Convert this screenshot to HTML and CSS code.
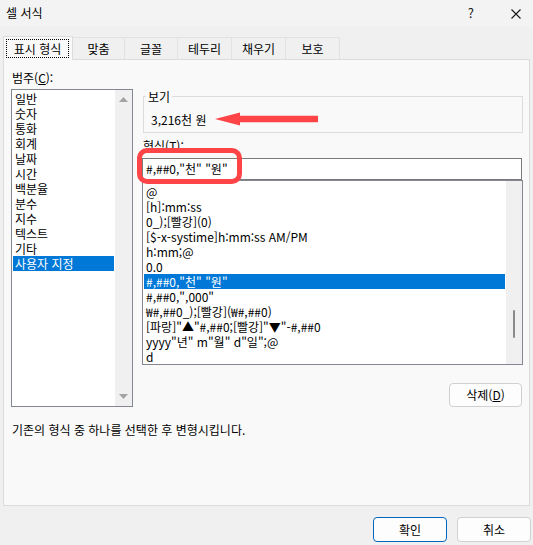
FILE: index.html
```html
<!DOCTYPE html>
<html lang="ko">
<head>
<meta charset="utf-8">
<title>셀 서식</title>
<link rel="stylesheet" href="styles.css">
</head>
<body>
<div class="titlebar">
  <span class="title">셀 서식</span>
  <span class="help">?</span>
  <svg class="close" width="10" height="10" viewBox="0 0 10 10"><path d="M0.5 0.5L9.5 9.5M9.5 0.5L0.5 9.5" stroke="#1a1a1a" stroke-width="1.1" fill="none"/></svg>
</div>
<div class="tabs">
  <div class="tab active"><span class="focus">표시 형식</span></div>
  <div class="tab w53">맞춤</div>
  <div class="tab w54">글꼴</div>
  <div class="tab w55">테두리</div>
  <div class="tab w55">채우기</div>
  <div class="tab w55">보호</div>
</div>
<div class="panel">
  <div class="top">
    <div class="left">
      <div class="label cat-label">범주(<u>C</u>):</div>
      <div class="listbox cat">
        <ul class="items">
          <li>일반</li>
          <li>숫자</li>
          <li>통화</li>
          <li>회계</li>
          <li>날짜</li>
          <li>시간</li>
          <li>백분율</li>
          <li>분수</li>
          <li>지수</li>
          <li>텍스트</li>
          <li>기타</li>
          <li class="sel">사용자 지정</li>
        </ul>
        <div class="vscroll arrows">
          <svg width="9" height="5" viewBox="0 0 9 5"><path d="M4.5 0L9 5H0Z" fill="#a3a3a3"/></svg>
          <svg width="9" height="5" viewBox="0 0 9 5"><path d="M0 0H9L4.5 5Z" fill="#a3a3a3"/></svg>
        </div>
      </div>
    </div>
    <div class="right">
      <fieldset class="sample">
        <legend>보기</legend>
        <div class="value">3,216천 원</div>
      </fieldset>
      <div class="label fmt-label">형식(<u>T</u>):</div>
      <div class="input">#,##0,"천" "원"</div>
      <div class="listbox fmt">
        <ul class="items">
          <li>@</li>
          <li>[h]:mm:ss</li>
          <li>0_);[빨강](0)</li>
          <li>[$-x-systime]h:mm:ss AM/PM</li>
          <li>h:mm;@</li>
          <li>0.0</li>
          <li class="sel">#,##0,"천" "원"</li>
          <li>#,##0,",000"</li>
          <li>₩#,##0_);[빨강](₩#,##0)</li>
          <li>[파랑]"▲"#,##0;[빨강]"▼"-#,##0</li>
          <li>yyyy"년" m"월" d"일";@</li>
          <li>d</li>
        </ul>
        <div class="vscroll thin"><div class="thumb"></div></div>
      </div>
      <div class="btnrow"><button class="btn">삭제(<u>D</u>)</button></div>
      <svg class="arrow" width="104" height="14" viewBox="0 0 104 14"><path d="M0 7L25 0.6V3.7H103V10.3H25V13.4Z" fill="#fe4447"/></svg>
      <div class="ring"></div>
    </div>
  </div>
  <p class="desc">기존의 형식 중 하나를 선택한 후 변형시킵니다.</p>
</div>
<div class="footer">
  <button class="btn primary">확인</button>
  <button class="btn">취소</button>
</div>
</body>
</html>
```
FILE: styles.css
```css
* { box-sizing: border-box; }
html, body { margin: 0; padding: 0; }
body {
  width: 533px;
  height: 545px;
  overflow: hidden;
  background: #f0f0f0;
  color: #000;
  font-family: "Noto Sans CJK KR", "Noto Sans", sans-serif;
  font-size: 12px;
  line-height: 15px;
}
u { text-decoration: underline; text-underline-offset: 1px; }

.titlebar {
  height: 27px;
  background: #f3f3f3;
  display: flex;
  align-items: center;
  padding: 0 12px 3px 6px;
}
.title { flex: 1; }
.help { margin-right: 37px; font-size: 13px; color: #1a1a1a; }
.close { display: block; margin-top: 3px; }

.tabs {
  height: 32px;
  display: flex;
  align-items: flex-end;
  padding-left: 3px;
  position: relative;
  z-index: 1;
}
.tab {
  height: 22px;
  border: 1px solid #e2e2e2;
  border-bottom: none;
  background: #f0f0f0;
  display: flex;
  align-items: center;
  justify-content: center;
  margin-left: -1px;
  padding-bottom: 1px;
}
.w53 { width: 53px; }
.w54 { width: 54px; }
.w55 { width: 55px; }
.tab.active {
  width: 70px;
  height: 24px;
  margin-left: 0;
  margin-bottom: -1px;
  background: #f9f9f9;
  border-color: #dcdcdc;
  padding: 2px 3px 0 2px;
  align-items: flex-start;
  position: relative;
  z-index: 2;
}
.focus {
  flex: 1;
  height: 19px;
  border: 1px dotted #000;
  display: flex;
  align-items: center;
  justify-content: center;
}

.panel {
  margin-left: 3px;
  width: 527px;
  height: 447px;
  border: 1px solid #dcdcdc;
  background: #f9f9f9;
  padding: 10px 0 0 7px;
}
.top { display: flex; gap: 9px; }
.left { width: 122px; }
.label { line-height: 16px; }
.cat-label { padding-left: 1px; margin-bottom: 3px; }

.listbox {
  display: flex;
  background: #fff;
  border: 1px solid #828790;
}
.items {
  flex: 1;
  list-style: none;
  margin: 0;
  padding: 1px 1px 0 1px;
  overflow: hidden;
}
.items li {
  height: 15px;
  line-height: 15px;
  padding-left: 2px;
  white-space: nowrap;
}
.items li.sel { background: #0078d7; color: #fff; }
.cat { width: 122px; height: 318px; }
.vscroll { background: #f0f0f0; }
.arrows {
  width: 17px;
  display: flex;
  flex-direction: column;
  justify-content: space-between;
  align-items: center;
  padding: 7px 0 7px;
}
.arrows svg { display: block; }

.right {
  width: 381px;
  padding-top: 19px;
  position: relative;
}
.sample {
  margin: 0 0 0 1px;
  width: 380px;
  height: 44px;
  border: 1px solid #dcdcdc;
  padding: 8px 0 0 7px;
  min-inline-size: 0;
}
.sample legend {
  padding: 0 2px;
  margin-left: -5px;
  line-height: 15px;
}
.value { line-height: 15px; }
.fmt-label { line-height: 15px; margin: 5px 0 5px 1px; }
.input {
  width: 380px;
  height: 22px;
  border: 1px solid #7a7a7a;
  background: #fff;
  padding-left: 3px;
  line-height: 20px;
}
.fmt { width: 381px; height: 185px; }
.fmt .items { padding-top: 3px; }
.thin {
  width: 16px;
  display: flex;
  flex-direction: column;
  align-items: center;
  padding-top: 129px;
}
.thumb { width: 2px; height: 28px; background: #8a8a8a; border-radius: 1px; }

.btnrow {
  display: flex;
  justify-content: flex-end;
  margin-top: 18px;
  padding-right: 1px;
}
.btn {
  font: inherit;
  color: #000;
  background: #fdfdfd;
  border: 1px solid #d0d0d0;
  border-radius: 4px;
  width: 73px;
  height: 24px;
  padding: 0;
  line-height: 20px;
}
.arrow { position: absolute; left: 73px; top: 42px; display: block; }
.ring {
  position: absolute;
  left: -5px;
  top: 78px;
  width: 105px;
  height: 36px;
  border: 5px solid #fe4447;
  border-radius: 10px;
}

.desc { margin: 15px 0 0 1px; line-height: 15px; }

.footer {
  display: flex;
  justify-content: flex-end;
  gap: 10px;
  margin-top: 11px;
  padding-right: 2px;
}
.footer .btn { width: 74px; height: 25px; }
.footer .primary { border-color: #0067c0; }
```
